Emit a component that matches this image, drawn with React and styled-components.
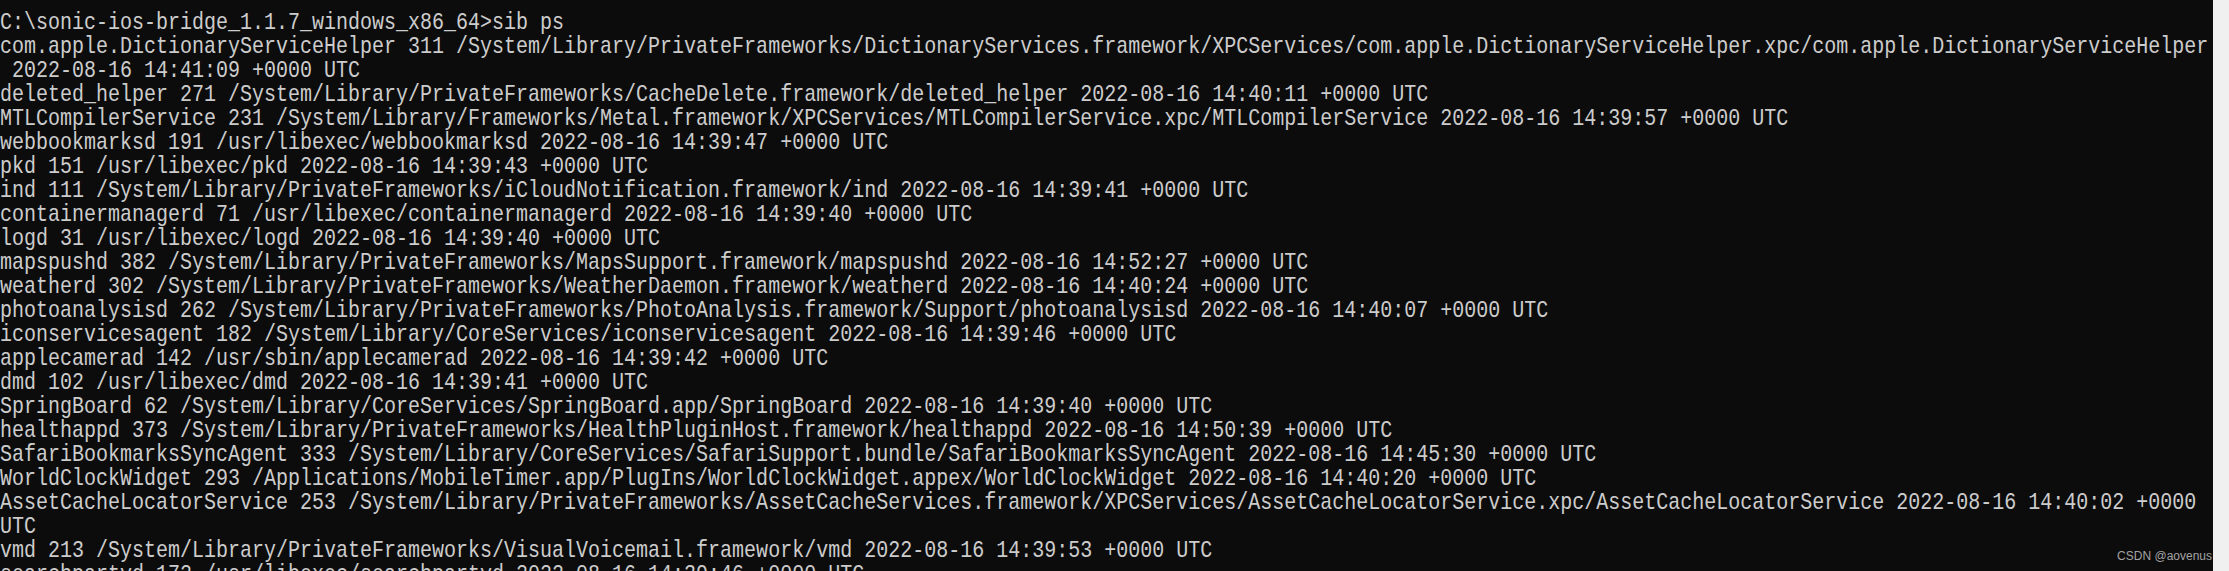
import styled, { createGlobalStyle } from 'styled-components';

const GlobalStyle = createGlobalStyle`
	html, body {
		margin: 0;
		padding: 0;
		background: #f0f0f0;
	}
`;

const output = [
	'C:\\sonic-ios-bridge_1.1.7_windows_x86_64>sib ps',
	'com.apple.DictionaryServiceHelper 311 /System/Library/PrivateFrameworks/DictionaryServices.framework/XPCServices/com.apple.DictionaryServiceHelper.xpc/com.apple.DictionaryServiceHelper',
	' 2022-08-16 14:41:09 +0000 UTC',
	'deleted_helper 271 /System/Library/PrivateFrameworks/CacheDelete.framework/deleted_helper 2022-08-16 14:40:11 +0000 UTC',
	'MTLCompilerService 231 /System/Library/Frameworks/Metal.framework/XPCServices/MTLCompilerService.xpc/MTLCompilerService 2022-08-16 14:39:57 +0000 UTC',
	'webbookmarksd 191 /usr/libexec/webbookmarksd 2022-08-16 14:39:47 +0000 UTC',
	'pkd 151 /usr/libexec/pkd 2022-08-16 14:39:43 +0000 UTC',
	'ind 111 /System/Library/PrivateFrameworks/iCloudNotification.framework/ind 2022-08-16 14:39:41 +0000 UTC',
	'containermanagerd 71 /usr/libexec/containermanagerd 2022-08-16 14:39:40 +0000 UTC',
	'logd 31 /usr/libexec/logd 2022-08-16 14:39:40 +0000 UTC',
	'mapspushd 382 /System/Library/PrivateFrameworks/MapsSupport.framework/mapspushd 2022-08-16 14:52:27 +0000 UTC',
	'weatherd 302 /System/Library/PrivateFrameworks/WeatherDaemon.framework/weatherd 2022-08-16 14:40:24 +0000 UTC',
	'photoanalysisd 262 /System/Library/PrivateFrameworks/PhotoAnalysis.framework/Support/photoanalysisd 2022-08-16 14:40:07 +0000 UTC',
	'iconservicesagent 182 /System/Library/CoreServices/iconservicesagent 2022-08-16 14:39:46 +0000 UTC',
	'applecamerad 142 /usr/sbin/applecamerad 2022-08-16 14:39:42 +0000 UTC',
	'dmd 102 /usr/libexec/dmd 2022-08-16 14:39:41 +0000 UTC',
	'SpringBoard 62 /System/Library/CoreServices/SpringBoard.app/SpringBoard 2022-08-16 14:39:40 +0000 UTC',
	'healthappd 373 /System/Library/PrivateFrameworks/HealthPluginHost.framework/healthappd 2022-08-16 14:50:39 +0000 UTC',
	'SafariBookmarksSyncAgent 333 /System/Library/CoreServices/SafariSupport.bundle/SafariBookmarksSyncAgent 2022-08-16 14:45:30 +0000 UTC',
	'WorldClockWidget 293 /Applications/MobileTimer.app/PlugIns/WorldClockWidget.appex/WorldClockWidget 2022-08-16 14:40:20 +0000 UTC',
	'AssetCacheLocatorService 253 /System/Library/PrivateFrameworks/AssetCacheServices.framework/XPCServices/AssetCacheLocatorService.xpc/AssetCacheLocatorService 2022-08-16 14:40:02 +0000 ',
	'UTC',
	'vmd 213 /System/Library/PrivateFrameworks/VisualVoicemail.framework/vmd 2022-08-16 14:39:53 +0000 UTC',
	'searchpartyd 172 /usr/libexec/searchpartyd 2022-08-16 14:39:46 +0000 UTC',
];

const Window = styled.div`
	display: flex;
	width: 100%;
	height: 571px;
	overflow: hidden;
`;

const Console = styled.div`
	position: relative;
	display: flex;
	flex-direction: column;
	width: 2213px;
	flex-shrink: 0;
	height: 100%;
	padding-top: 12px;
	box-sizing: border-box;
	background: #0c0c0c;
	overflow: hidden;
`;

const Line = styled.div`
	height: 24px;
	flex-shrink: 0;
	font-family: 'Liberation Mono', 'DejaVu Sans Mono', monospace;
	font-size: 20px;
	line-height: 24px;
	color: #cccccc;
	white-space: pre;
`;

// the console font is taller than it is wide, so stretch it from the baseline
const Glyphs = styled.span`
	display: inline-block;
	transform: scaleY(1.2);
	transform-origin: 0 17px;
`;

const ScrollTrack = styled.div`
	flex: 1;
	background: #f0f0f0;
`;

const Watermark = styled.div`
	position: absolute;
	top: 550px;
	right: 1px;
	font-family: 'Liberation Sans', Arial, sans-serif;
	font-size: 12px;
	line-height: 12px;
	color: #a3a3a3;
`;

const App = () => (
	<>
		<GlobalStyle />
		<Window>
			<Console>
				{output.map((text, i) => (
					<Line key={i}>
						<Glyphs>{text}</Glyphs>
					</Line>
				))}
				<Watermark>CSDN @aovenus</Watermark>
			</Console>
			<ScrollTrack />
		</Window>
	</>
);

export default App;
